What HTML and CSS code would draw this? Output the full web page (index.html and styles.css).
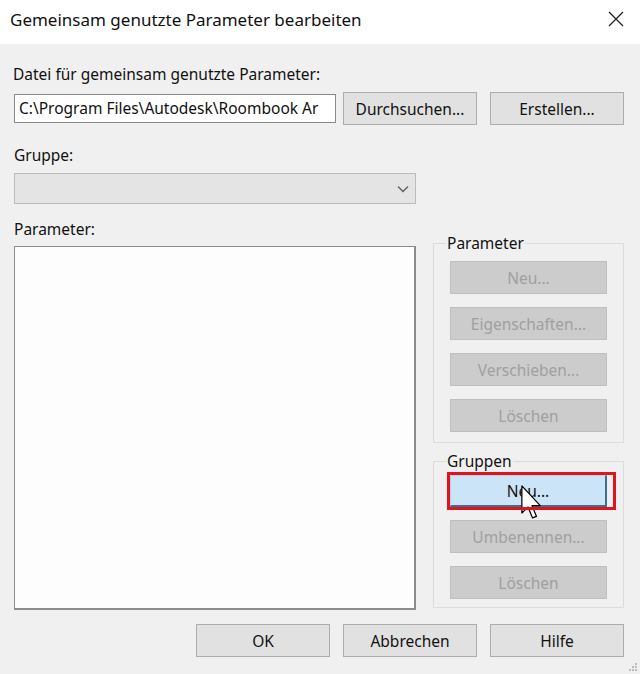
FILE: index.html
```html
<!DOCTYPE html>
<html lang="de">
<head>
  <meta charset="UTF-8">
  <title>Gemeinsam genutzte Parameter bearbeiten</title>
  <link rel="stylesheet" href="styles.css">
</head>
<body>

  <div class="dialog">
    <div class="title-bar">
      <span class="title">Gemeinsam genutzte Parameter bearbeiten</span>
      <svg class="close" width="16" height="16" viewBox="0 0 16 16">
        <path d="M1 1 L15 15 M15 1 L1 15" stroke="#222" stroke-width="1.3" fill="none"/>
      </svg>
    </div>

    <div class="content">
      <div class="label file-label">Datei für gemeinsam genutzte Parameter:</div>
      <div class="file-row">
        <div class="textbox">C:\Program Files\Autodesk\Roombook Ar</div>
        <button class="btn browse">Durchsuchen...</button>
        <button class="btn create">Erstellen...</button>
      </div>

      <div class="main">
        <div class="left">
          <div class="label group-label">Gruppe:</div>
          <div class="combo">
            <svg width="12" height="8" viewBox="0 0 12 8">
              <path d="M1 1.5 L6 6.5 L11 1.5" stroke="#606060" stroke-width="1.4" fill="none"/>
            </svg>
          </div>
          <div class="label param-label">Parameter:</div>
          <div class="listbox"></div>
        </div>

        <div class="right">
          <fieldset class="groupbox params">
            <legend>Parameter</legend>
            <button class="btn disabled">Neu...</button>
            <button class="btn disabled">Eigenschaften...</button>
            <button class="btn disabled">Verschieben...</button>
            <button class="btn disabled">Löschen</button>
          </fieldset>

          <fieldset class="groupbox groups">
            <legend>Gruppen</legend>
            <div class="focus-wrap">
              <button class="btn hot">Neu...</button>
              <svg class="pointer" width="21" height="35" viewBox="0 0 12 20">
                <path d="M0.5 0.5 L0.5 16 L4 12.6 L6.6 18.8 L8.8 17.9 L6.3 11.8 L11 11.8 Z" fill="#fff" stroke="#000" stroke-width="0.7" stroke-linejoin="round"/>
              </svg>
            </div>
            <button class="btn disabled">Umbenennen...</button>
            <button class="btn disabled">Löschen</button>
          </fieldset>
        </div>
      </div>

      <div class="footer">
        <button class="btn">OK</button>
        <button class="btn">Abbrechen</button>
        <button class="btn">Hilfe</button>
      </div>
    </div>

    <svg class="grip" width="10" height="10" viewBox="0 0 10 10">
      <rect x="7" y="1" width="2" height="2" fill="#bbb"/>
      <rect x="4" y="4" width="2" height="2" fill="#bbb"/>
      <rect x="7" y="4" width="2" height="2" fill="#bbb"/>
      <rect x="1" y="7" width="2" height="2" fill="#bbb"/>
      <rect x="4" y="7" width="2" height="2" fill="#bbb"/>
      <rect x="7" y="7" width="2" height="2" fill="#bbb"/>
    </svg>
  </div>

</body>
</html>
```

FILE: styles.css
```css
:root {
  --window-bg: #f0f0f0;
  --btn-bg: #e1e1e1;
  --btn-border: #adadad;
  --disabled-bg: #cccccc;
  --disabled-border: #bfbfbf;
  --disabled-text: #a0a0a0;
  --hot-bg: #cce4f7;
  --hot-border: #3c6e8f;
  --mark: #e0141e;
}

body {
  margin: 0;
  padding: 0;
  font-family: "Noto Sans", "Open Sans", sans-serif;
  font-size: 15.5px;
  color: #111;
  background-color: var(--window-bg);
}

.dialog {
  position: relative;
  width: 640px;
  height: 674px;
  overflow: hidden;
  background-color: var(--window-bg);
}

.title-bar {
  height: 44px;
  background-color: #fff;
  display: flex;
  align-items: center;
  justify-content: space-between;
  padding: 0 16px 0 10px;
}

.title {
  font-size: 17px;
  color: #111;
  margin-top: -6px;
}

.close {
  margin-top: -6px;
}

.content {
  padding: 20px 16px 0 14px;
}

.label {
  line-height: 20px;
}

.file-label {
  margin-left: -1px;
}

.file-row {
  display: flex;
  align-items: center;
  margin-top: 8px;
}

.textbox {
  height: 29px;
  line-height: 27px;
  padding-left: 4px;
  box-sizing: border-box;
  width: 322px;
  border: 1px solid #8a8a8a;
  background-color: #fff;
  white-space: nowrap;
  overflow: hidden;
}

.btn {
  font-family: inherit;
  font-size: 15.5px;
  color: #111;
  height: 33px;
  width: 134px;
  padding: 0;
  background-color: var(--btn-bg);
  border: 1px solid var(--btn-border);
  border-radius: 0;
}

.browse {
  margin-left: 7px;
}

.create {
  margin-left: 13px;
}

.main {
  display: flex;
  margin-top: 12px;
}

.left {
  width: 402px;
}

.group-label {
  margin-top: 8px;
}

.combo {
  height: 31px;
  box-sizing: border-box;
  margin-top: 8px;
  background-color: #e4e4e4;
  border: 1px solid #bcbcbc;
  display: flex;
  align-items: center;
  justify-content: flex-end;
  padding-right: 6px;
}

.param-label {
  margin-top: 15px;
}

.listbox {
  height: 364px;
  box-sizing: border-box;
  margin-top: 7px;
  background-color: #fdfdfd;
  border: 1px solid #8c8c8c;
  border-bottom-width: 2px;
  border-right-width: 2px;
}

.right {
  width: 191px;
  margin-left: 17px;
  padding-top: 96px;
}

.groupbox {
  margin: 0;
  padding: 8px 16px 10px 16px;
  border: 1px solid #dcdcdc;
  display: flex;
  flex-direction: column;
  gap: 13px;
}

.groupbox legend {
  padding: 0 1px;
  margin-left: -4px;
  line-height: 20px;
  color: #111;
}

.groups {
  margin-top: 8px;
  padding-top: 3px;
  padding-bottom: 8px;
}

.groupbox .btn {
  width: 157px;
}

.btn.disabled {
  background-color: var(--disabled-bg);
  border-color: var(--disabled-border);
  color: var(--disabled-text);
}

.focus-wrap {
  position: relative;
  margin-top: 1px;
}

.focus-wrap::after {
  content: "";
  position: absolute;
  left: -3px;
  top: -3px;
  width: 169px;
  height: 38px;
  border: 3px solid var(--mark);
  box-sizing: border-box;
}

.btn.hot {
  display: block;
  height: 32px;
  background-color: var(--hot-bg);
  border: 1px solid #b7cfe2;
  border-right: 2px solid var(--hot-border);
  border-bottom: 2px solid var(--hot-border);
}

.pointer {
  position: absolute;
  left: 71px;
  top: 10px;
}

.footer {
  display: flex;
  justify-content: flex-end;
  gap: 13px;
  margin-top: 14px;
}

.grip {
  position: absolute;
  right: 2px;
  bottom: 2px;
}
```
